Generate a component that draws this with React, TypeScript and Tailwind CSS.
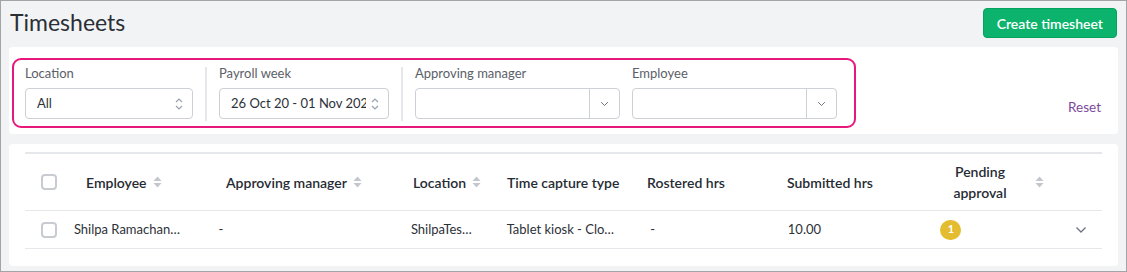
import type { ReactNode } from "react";

const font = { fontFamily: "Lato, 'Open Sans', sans-serif" };

function UpDown() {
  return (
    <svg className="h-[14px] w-[10px] text-gray-400" viewBox="0 0 10 14" fill="none" stroke="currentColor" strokeWidth="1.2">
      <path d="M2 5l3-3 3 3" />
      <path d="M2 9l3 3 3-3" />
    </svg>
  );
}

function ChevronDown({ className }: { className?: string }) {
  return (
    <svg className={className} viewBox="0 0 12 8" fill="none" stroke="currentColor" strokeWidth="1.3">
      <path d="M1.5 1.5l4.5 4.5 4.5-4.5" />
    </svg>
  );
}

function SortIcon() {
  return (
    <svg className="ml-1.5 h-[12px] w-[9px] text-[#c3c6cc]" viewBox="0 0 9 12" fill="currentColor">
      <path d="M4.5 0.5L8.5 5H0.5z" />
      <path d="M4.5 11.5L8.5 7H0.5z" />
    </svg>
  );
}

function Checkbox() {
  return <span className="block h-[16px] w-[16px] rounded-[4px] border-2 border-[#c8cbd0] bg-white" />;
}

function Field({ label, children, width }: { label: string; children: ReactNode; width: string }) {
  return (
    <div className={`flex flex-col ${width}`}>
      <span className="mb-[7px] text-[13px] leading-[16px] text-[#5b6068]">{label}</span>
      {children}
    </div>
  );
}

function NativeSelect({ value }: { value: string }) {
  return (
    <div className="flex h-[31px] items-center justify-between overflow-hidden rounded-[4px] border border-[#cdd0d5] bg-white pl-[11px] pr-[8px] text-[13px] text-[#2d3138]">
      <span className="overflow-hidden whitespace-nowrap">{value}</span>
      <span className="-ml-3 bg-white pl-1">
        <UpDown />
      </span>
    </div>
  );
}

function ComboSelect() {
  return (
    <div className="flex h-[31px] overflow-hidden rounded-[4px] border border-[#cdd0d5] bg-white">
      <div className="flex-1" />
      <div className="flex w-[30px] items-center justify-center border-l border-[#cdd0d5]">
        <ChevronDown className="h-[6px] w-[9px] text-gray-500" />
      </div>
    </div>
  );
}

export default function App() {
  return (
    <div style={font} className="h-[272px] w-[1127px] overflow-hidden border border-[#a2a4a8] bg-[#f2f3f5]">
      <div className="flex items-start justify-between pl-[9px] pr-[9px] pt-[7px]">
        <h1 className="text-[23px] leading-[28px] text-[#2a2f36]">Timesheets</h1>
        <button className="h-[30px] rounded-[4px] border border-[#06a35f] bg-[#0bb36c] px-[13px] text-[14px] font-semibold text-white">
          Create timesheet
        </button>
      </div>

      <div className="mx-[8px] mt-[9px] flex h-[87px] items-start justify-between rounded-[4px] bg-white pl-[3px] pr-[17px] pt-[11px]">
        <div className="flex h-[70px] w-[844px] items-start rounded-[9px] border-2 border-[#e8177c] pl-[11px] pt-[5px]">
          <Field label="Location" width="w-[168px]">
            <NativeSelect value="All" />
          </Field>
          <div className="mx-[12px] mt-[2px] h-[54px] w-[2px] bg-[#e6e7ea]" />
          <Field label="Payroll week" width="w-[170px]">
            <NativeSelect value="26 Oct 20 - 01 Nov 2020" />
          </Field>
          <div className="mx-[12px] mt-[2px] h-[54px] w-[2px] bg-[#e6e7ea]" />
          <Field label="Approving manager" width="w-[205px]">
            <ComboSelect />
          </Field>
          <div className="w-[12px]" />
          <Field label="Employee" width="w-[205px]">
            <ComboSelect />
          </Field>
        </div>
        <span className="mt-[39px] text-[13.5px] text-[#7b4a9c]">Reset</span>
      </div>

      <div className="mx-[8px] mt-[10px] h-[122px] rounded-[4px] bg-white px-[16px] pt-[8px]">
        <div className="h-[2px] bg-[#e6e7ea]" />
        <div className="flex h-[57px] items-center border-b border-[#e6e7ea] text-[14px] font-semibold text-[#262b33]">
          <div className="w-[49px] pl-[16px]"><Checkbox /></div>
          <div className="flex w-[135px] items-center pl-[12px]">Employee<SortIcon /></div>
          <div className="flex w-[194px] items-center pl-[17px]">Approving manager<SortIcon /></div>
          <div className="flex w-[94px] items-center pl-[10px]">Location<SortIcon /></div>
          <div className="w-[140px] pl-[10px]">Time capture type</div>
          <div className="w-[140px] pl-[10px]">Rostered hrs</div>
          <div className="w-[150px] pl-[10px]">Submitted hrs</div>
          <div className="flex w-[140px] items-center">
            <span className="w-[100px] pl-[6px] text-center leading-[21px]">Pending approval</span>
            <span className="ml-[2px]"><SortIcon /></span>
          </div>
        </div>
        <div className="flex h-[38px] items-center border-b border-[#e6e7ea] text-[13px] text-[#2d3138]">
          <div className="w-[49px] pl-[16px]"><Checkbox /></div>
          <div className="w-[135px] whitespace-nowrap">Shilpa Ramachan…</div>
          <div className="w-[194px] pl-[10px]">-</div>
          <div className="w-[94px] whitespace-nowrap pl-[9px]">ShilpaTes…</div>
          <div className="w-[140px] whitespace-nowrap pl-[11px]">Tablet kiosk - Clo…</div>
          <div className="w-[140px] pl-[15px]">-</div>
          <div className="w-[150px] pl-[13px]">10.00</div>
          <div className="w-[150px] pl-[16px]">
            <span className="flex h-[20px] w-[21px] items-center justify-center rounded-full bg-[#e3bc2f] text-[11px] font-bold text-white">1</span>
          </div>
          <div className="flex flex-1 justify-end pr-[14px]">
            <ChevronDown className="h-[8px] w-[14px] text-gray-500" />
          </div>
        </div>
      </div>
    </div>
  );
}
